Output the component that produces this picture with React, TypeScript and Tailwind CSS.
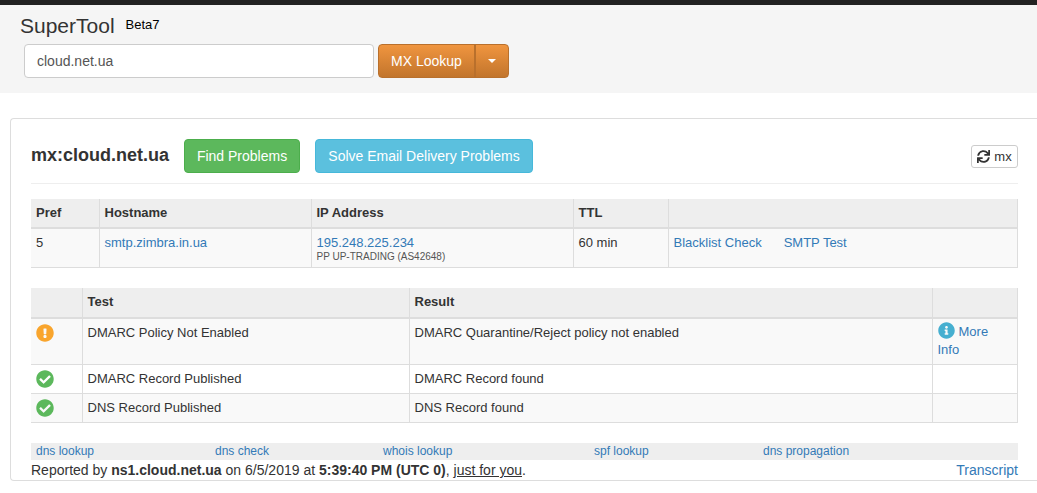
import { FaCheckCircle, FaExclamationCircle, FaInfoCircle, FaSync } from "react-icons/fa";

const th = "border-r border-b-2 border-[#ddd] px-[5px] pt-[5px] pb-[2px] text-left align-top font-bold";
const td = "border-r border-b border-[#ddd] px-[5px] pt-[5px] pb-[2px] align-top font-normal";
const iconTd = "border-r border-b border-[#ddd] px-[5px] pt-[5px] pb-[3px] align-top font-normal";
const link = "text-[#337ab7]";

const footerLinks = [
  { label: "dns lookup", width: "w-[179px]" },
  { label: "dns check", width: "w-[168px]" },
  { label: "whois lookup", width: "w-[211px]" },
  { label: "spf lookup", width: "w-[169px]" },
  { label: "dns propagation", width: "w-[200px]" },
];

export default function App() {
  return (
    <div className="h-[493px] w-[1037px] overflow-hidden bg-white font-['Liberation_Sans',Arial,sans-serif] text-[14px] leading-[20px] text-[#333]">
      <div className="h-[5px] bg-[#222]" />

      {/* Search header */}
      <div className="h-[88px] bg-[#f5f5f5] pt-[8px]">
        <div className="flex items-start pl-[20px]">
          <span className="text-[21px] leading-[26px]">SuperTool</span>
          <span className="ml-[11px] pt-[2px] text-[13px] leading-[20px] text-black">Beta7</span>
        </div>
        <div className="mt-[5px] flex pl-[24px]">
          <input
            readOnly
            value="cloud.net.ua"
            className="h-[34px] w-[350px] rounded border border-[#ccc] bg-white px-3 text-[14px] text-[#555] outline-none"
          />
          <div className="ml-1 flex h-[34px] rounded border border-[#b9702c] bg-gradient-to-b from-[#f0953f] to-[#c2752c] text-white">
            <div className="flex w-[97px] items-center justify-center border-r-2 border-[#b9702c]">MX Lookup</div>
            <div className="flex w-[32px] items-center justify-center">
              <span className="border-x-4 border-t-4 border-x-transparent border-t-white" />
            </div>
          </div>
        </div>
      </div>

      {/* Result card */}
      <div className="mt-[25px] ml-[10px] h-[363px] w-[1040px] rounded-l border border-r-0 border-[#ddd] pt-[20px] pl-[20px]">
        <div className="w-[987px]">
          <div className="flex h-[45px] items-start border-b border-[#eee]">
            <span className="pt-[5px] text-[18px] leading-[22px] font-bold">mx:cloud.net.ua</span>
            <button className="ml-[15px] h-[34px] w-[116px] rounded border border-[#4cae4c] bg-[#5cb85c] text-white">Find Problems</button>
            <button className="ml-[15px] h-[34px] w-[218px] rounded border border-[#46b8da] bg-[#5bc0de] text-white">
              Solve Email Delivery Problems
            </button>
            <button className="mt-[6px] ml-auto flex h-[23px] w-[47px] items-center justify-center gap-[4px] rounded-[3px] border border-[#ccc] bg-white text-[13px]">
              <FaSync className="h-[13px] w-[13px]" />
              mx
            </button>
          </div>

          <table className="mt-[15px] w-[987px] table-fixed border-collapse text-[13px] leading-[18px]">
            <colgroup>
              <col className="w-[68px]" />
              <col className="w-[212px]" />
              <col className="w-[262px]" />
              <col className="w-[95px]" />
              <col />
            </colgroup>
            <thead className="bg-[#eee]">
              <tr className="h-[29px]">
                <th className={th}>Pref</th>
                <th className={th}>Hostname</th>
                <th className={th}>IP Address</th>
                <th className={th}>TTL</th>
                <th className={th}></th>
              </tr>
            </thead>
            <tbody className="bg-[#f9f9f9]">
              <tr className="h-[39px]">
                <td className={td}>5</td>
                <td className={td}>
                  <span className={link}>smtp.zimbra.in.ua</span>
                </td>
                <td className={td}>
                  <div className={`${link} leading-[18px]`}>195.248.225.234</div>
                  <div className="text-[10px] leading-[10px] text-[#555]">PP UP-TRADING (AS42648)</div>
                </td>
                <td className={td}>60 min</td>
                <td className={td}>
                  <span className={link}>Blacklist Check</span>
                  <span className={`${link} ml-[22px]`}>SMTP Test</span>
                </td>
              </tr>
            </tbody>
          </table>

          <table className="mt-[20px] w-[987px] table-fixed border-collapse text-[13px] leading-[18px]">
            <colgroup>
              <col className="w-[51px]" />
              <col className="w-[327px]" />
              <col className="w-[523px]" />
              <col />
            </colgroup>
            <thead className="bg-[#eee]">
              <tr className="h-[30px]">
                <th className={th}></th>
                <th className={th}>Test</th>
                <th className={th}>Result</th>
                <th className={th}></th>
              </tr>
            </thead>
            <tbody>
              <tr className="h-[47px] bg-[#f9f9f9]">
                <td className={iconTd}>
                  <FaExclamationCircle className="h-[18px] w-[18px] text-[#f9a52d]" />
                </td>
                <td className={td}>DMARC Policy Not Enabled</td>
                <td className={td}>DMARC Quarantine/Reject policy not enabled</td>
                <td className="border-r border-b border-[#ddd] px-[5px] pt-[3px] pb-[2px] align-top font-normal">
                  <FaInfoCircle className="mr-1 inline h-[17px] w-[17px] align-[-3px] text-[#46afd0]" />
                  <span className={link}>More Info</span>
                </td>
              </tr>
              <tr className="h-[29px]">
                <td className={iconTd}>
                  <FaCheckCircle className="h-[18px] w-[18px] text-[#5cb85c]" />
                </td>
                <td className={td}>DMARC Record Published</td>
                <td className={td}>DMARC Record found</td>
                <td className={td}></td>
              </tr>
              <tr className="h-[29px] bg-[#f9f9f9]">
                <td className={iconTd}>
                  <FaCheckCircle className="h-[18px] w-[18px] text-[#5cb85c]" />
                </td>
                <td className={td}>DNS Record Published</td>
                <td className={td}>DNS Record found</td>
                <td className={td}></td>
              </tr>
            </tbody>
          </table>

          <div className="mt-[20px] flex h-[17px] items-center bg-[#eee] pb-[2px] pl-[5px] text-[12px]">
            {footerLinks.map((item) => (
              <span key={item.label} className={`${item.width} ${link}`}>
                {item.label}
              </span>
            ))}
          </div>
          <div className="flex justify-between leading-[20px]">
            <span>
              Reported by <b>ns1.cloud.net.ua</b> on 6/5/2019 at <b>5:39:40 PM (UTC 0)</b>, <u>just for you</u>.
            </span>
            <span className={link}>Transcript</span>
          </div>
        </div>
      </div>
    </div>
  );
}
